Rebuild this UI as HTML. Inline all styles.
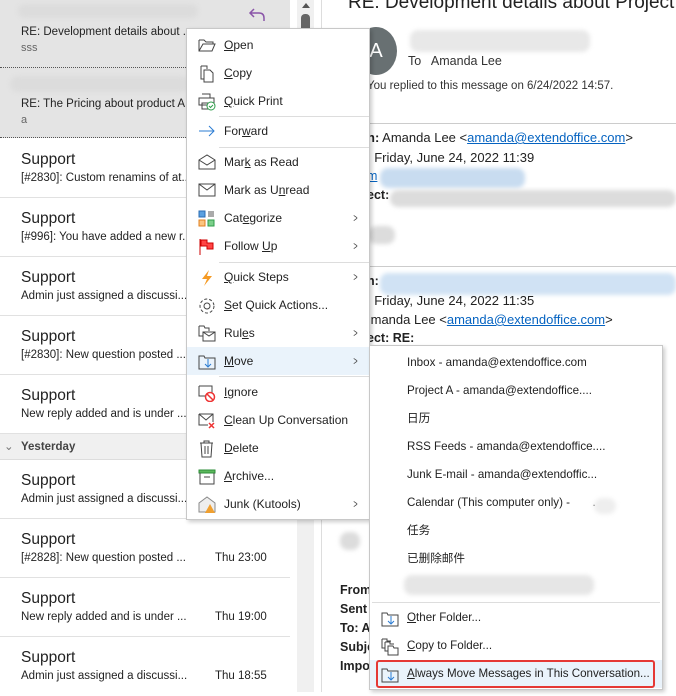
<!DOCTYPE html>
<html><head><meta charset="utf-8"><style>
*{margin:0;padding:0;box-sizing:border-box}
body{width:676px;height:692px;overflow:hidden;background:#fff;font-family:"Segoe UI","Liberation Sans","Noto Sans CJK SC",sans-serif;position:relative;color:#222}
.abs{position:absolute}
.row{position:absolute;left:0;width:290px;height:59px;border-bottom:1px solid #e1e1e1}
.row .n{position:absolute;left:21px;top:12px;font-size:15.5px;color:#222}
.row .s{position:absolute;left:21px;top:33px;font-size:11.5px;color:#222;white-space:nowrap}
.row .t{position:absolute;left:215px;top:33px;font-size:11.5px}
.blur{position:absolute;background:#dcdcdc;border-radius:8px;filter:blur(2px)}
.menu{position:absolute;background:#fff;border:1px solid #c8c8c8;box-shadow:2px 2px 4px rgba(0,0,0,.2);overflow:hidden}
.mi{position:absolute;left:0;right:0;height:28px;font-size:12px;line-height:28px;color:#222;white-space:nowrap}
.sub .mi{font-size:11.6px}
.mi .l{position:absolute;left:37px}
.mi .ar{position:absolute;right:10px;top:0;font-size:12px;color:#444;transform:scaleX(.6)}
.mi svg{position:absolute;left:11px;top:6px}
.sep{position:absolute;height:1px;background:#ddd}
.rp{font-size:12.5px;position:absolute;white-space:nowrap}
a{color:#0563c1;text-decoration:underline}
u{text-decoration:underline}
</style></head><body>
<div class="abs" style="left:0;top:0;width:290px;height:68px;background:#e4e4e4;border-bottom:1px dotted #555"></div>
<div class="blur" style="left:18px;top:4px;width:180px;height:14px"></div>
<div class="rp" style="left:21px;top:26px;font-size:11.5px">RE: Development details about ...</div>
<div class="rp" style="left:21px;top:42px;font-size:11px;color:#666">sss</div>
<svg class="abs" style="left:248px;top:7px" width="18" height="16"><path d="M6 2 L2 6 L6 10 M2 6 H11 Q16 6 16 11 V14" stroke="#8a55a8" stroke-width="1.5" fill="none"/></svg>
<div class="abs" style="left:0;top:68px;width:290px;height:70px;background:#e4e4e4;border-bottom:1px dotted #555"></div>
<div class="blur" style="left:10px;top:76px;width:180px;height:16px"></div>
<div class="rp" style="left:21px;top:98px;font-size:11.5px">RE: The Pricing about product A</div>
<div class="rp" style="left:21px;top:114px;font-size:11px;color:#666">a</div>
<div class="row" style="top:139px"><div class="n">Support</div><div class="s">[#2830]: Custom renamins of at...</div></div>
<div class="row" style="top:198px"><div class="n">Support</div><div class="s">[#996]: You have added a new r...</div></div>
<div class="row" style="top:257px"><div class="n">Support</div><div class="s">Admin just assigned a discussi...</div></div>
<div class="row" style="top:316px"><div class="n">Support</div><div class="s">[#2830]: New question posted ...</div></div>
<div class="row" style="top:375px"><div class="n">Support</div><div class="s">New reply added and is under ...</div></div>
<div class="abs" style="left:0;top:434px;width:290px;height:26px;background:#f0f0f0;border-bottom:1px solid #ddd;font-size:11.5px;font-weight:bold;color:#444;line-height:26px"><span style="position:absolute;left:4px;color:#777;font-weight:normal">⌄</span><span style="position:absolute;left:21px">Yesterday</span></div>
<div class="row" style="top:460px"><div class="n">Support</div><div class="s">Admin just assigned a discussi...</div></div>
<div class="row" style="top:519px"><div class="n">Support</div><div class="s">[#2828]: New question posted ...</div><div class="t">Thu 23:00</div></div>
<div class="row" style="top:578px"><div class="n">Support</div><div class="s">New reply added and is under ...</div><div class="t">Thu 19:00</div></div>
<div class="row" style="top:637px;border:none"><div class="n">Support</div><div class="s">Admin just assigned a discussi...</div><div class="t">Thu 18:55</div></div>
<div class="abs" style="left:297px;top:0;width:17px;height:692px;background:#f0f0f0"></div>
<div class="abs" style="left:302px;top:3px;width:0;height:0;border-left:4px solid transparent;border-right:4px solid transparent;border-bottom:5px solid #555"></div>
<div class="abs" style="left:301px;top:14px;width:9px;height:20px;background:#666;border-radius:4px"></div>
<div class="abs" style="left:321px;top:0;width:1px;height:692px;background:#ddd"></div>
<div class="rp" style="left:348px;top:-8px;font-size:19px">RE: Development details about Project A</div>
<div class="abs" style="left:355px;top:27px;width:42px;height:48px;border-radius:50%;background:#687072;color:#fff;font-size:20px;line-height:48px;text-align:center">A</div>
<div class="blur" style="left:410px;top:30px;width:180px;height:22px;background:#e8e8e8"></div>
<div class="rp" style="left:408px;top:54px;color:#333">To &nbsp; Amanda Lee</div>
<div class="rp" style="left:367px;top:80px;font-size:11.5px;color:#333">You replied to this message on 6/24/2022 14:57.</div>
<div class="abs" style="left:367px;top:123px;width:309px;height:1px;background:#ccc"></div>
<div class="rp" style="left:367px;top:130px;font-size:13px"><b>n:</b> Amanda Lee &lt;<a>amanda@extendoffice.com</a>&gt;</div>
<div class="rp" style="left:367px;top:150px;font-size:13px">: Friday, June 24, 2022 11:39</div>
<div class="rp" style="left:367px;top:169px"><a>m</a></div>
<div class="blur" style="left:380px;top:168px;width:145px;height:20px;background:#c8dcf0"></div>
<div class="rp" style="left:367px;top:188px"><b>ect:</b></div>
<div class="blur" style="left:390px;top:190px;width:286px;height:17px"></div>
<div class="blur" style="left:368px;top:226px;width:27px;height:18px"></div>
<div class="abs" style="left:367px;top:266px;width:309px;height:1px;background:#ccc"></div>
<div class="rp" style="left:367px;top:274px"><b>n:</b></div>
<div class="blur" style="left:380px;top:273px;width:296px;height:22px;background:#d0e2f4"></div>
<div class="rp" style="left:367px;top:293px;font-size:13px">: Friday, June 24, 2022 11:35</div>
<div class="rp" style="left:367px;top:312px;font-size:13px">.manda Lee &lt;<a>amanda@extendoffice.com</a>&gt;</div>
<div class="rp" style="left:367px;top:331px"><b>ect: RE:</b></div>
<div class="blur" style="left:340px;top:532px;width:20px;height:18px"></div>
<div class="rp" style="left:340px;top:581px;font-weight:bold;line-height:19px">From<br>Sent<br>To: A<br>Subje<br>Impo</div>
<div class="menu" style="left:186px;top:28px;width:184px;height:492px">
 <div class="mi" style="top:2px"><svg width="18" height="16"><path d="M1 3h5l2 2h7v2M1 3v11h13l3-7H5l-4 7" stroke="#444" fill="none"/></svg><span class="l"><u>O</u>pen</span></div>
 <div class="mi" style="top:30px"><svg width="18" height="18"><path d="M3 1h6v3M3 1v13h3M6 5h6l3 3v9H6z" stroke="#444" fill="none"/></svg><span class="l"><u>C</u>opy</span></div>
 <div class="mi" style="top:58px"><svg width="18" height="18"><path d="M4 1h8v4M1 5h15v7H1zM4 10h6v6H4z" stroke="#444" fill="#fff"/><circle cx="13" cy="13" r="4" fill="#fff" stroke="#2e9e4a"/><path d="M11 13l1.5 1.5L15 12" stroke="#2e9e4a" fill="none"/></svg><span class="l"><u>Q</u>uick Print</span></div>
 <div class="sep" style="left:32px;right:0;top:87px"></div>
 <div class="mi" style="top:88px"><svg width="18" height="16"><path d="M1 8h15M11 3l5 5-5 5" stroke="#2b7cd3" fill="none"/></svg><span class="l">For<u>w</u>ard</span></div>
 <div class="sep" style="left:32px;right:0;top:118px"></div>
 <div class="mi" style="top:119px"><svg width="18" height="16"><path d="M1 6l8-5 8 5v9H1zM1 6l8 5 8-5" stroke="#444" fill="none"/></svg><span class="l">Mar<u>k</u> as Read</span></div>
 <div class="mi" style="top:147px"><svg width="18" height="16"><path d="M1 2h16v12H1zM1 2l8 6 8-6" stroke="#444" fill="none"/></svg><span class="l">Mark as U<u>n</u>read</span></div>
 <div class="mi" style="top:175px"><svg width="18" height="18"><rect x="1" y="1" width="6" height="6" fill="#5aa0e0" stroke="#2b6cb3"/><rect x="10" y="1" width="6" height="6" fill="#aaa"/><rect x="1" y="10" width="6" height="6" fill="#fbc580" stroke="#e08020"/><rect x="10" y="10" width="6" height="6" fill="#7ccf8a" stroke="#2e9e4a"/></svg><span class="l">Cat<u>e</u>gorize</span><span class="ar">&gt;</span></div>
 <div class="mi" style="top:203px"><svg width="18" height="18"><path d="M2 1v16" stroke="#c00"/><path d="M3 2h6v3h6v6H9V8H3z" fill="#f44" stroke="#c00"/></svg><span class="l">Follow <u>U</u>p</span><span class="ar">&gt;</span></div>
 <div class="sep" style="left:32px;right:0;top:233px"></div>
 <div class="mi" style="top:234px"><svg width="18" height="18"><path d="M11 1L4 10h5l-3 7 8-10H9z" fill="#f59a23"/></svg><span class="l"><u>Q</u>uick Steps</span><span class="ar">&gt;</span></div>
 <div class="mi" style="top:262px"><svg width="18" height="18"><circle cx="9" cy="9" r="3" stroke="#444" fill="none"/><circle cx="9" cy="9" r="7" stroke="#444" fill="none" stroke-dasharray="3 2"/></svg><span class="l"><u>S</u>et Quick Actions...</span></div>
 <div class="mi" style="top:290px"><svg width="18" height="18"><path d="M1 1h5l1 2h4v3M1 1v10h4M5 7h12v9H5zM5 7l6 4 6-4" stroke="#444" fill="none"/></svg><span class="l">Rul<u>e</u>s</span><span class="ar">&gt;</span></div>
 <div class="mi" style="top:318px;background:#eaf3fb"><svg width="18" height="18"><path d="M1 3h5l1 2h10v11H1z" stroke="#444" fill="none"/><path d="M10 6v8M7 11l3 3 3-3" stroke="#2b7cd3" fill="none"/></svg><span class="l"><u>M</u>ove</span><span class="ar">&gt;</span></div>
 <div class="sep" style="left:32px;right:0;top:347px"></div>
 <div class="mi" style="top:349px"><svg width="18" height="18"><path d="M1 2h13v9M1 2v10h7" stroke="#444" fill="none"/><circle cx="12" cy="13" r="4.5" stroke="#e33" stroke-width="1.5" fill="#fff"/><path d="M9 10l6 6" stroke="#e33" stroke-width="1.5"/></svg><span class="l"><u>I</u>gnore</span></div>
 <div class="mi" style="top:377px"><svg width="18" height="18"><path d="M1 2h14v8M1 2v11h9M1 2l7 6 7-6" stroke="#444" fill="none"/><path d="M11 11l5 5M16 11l-5 5" stroke="#e33" stroke-width="1.5"/></svg><span class="l"><u>C</u>lean Up Conversation</span></div>
 <div class="mi" style="top:405px"><svg width="18" height="18"><path d="M2 3h13M6 3V1h5v2M3 3l1 14h9l1-14M7 6v8M10 6v8" stroke="#444" fill="none"/></svg><span class="l"><u>D</u>elete</span></div>
 <div class="mi" style="top:433px"><svg width="18" height="18"><rect x="1" y="2" width="16" height="3" fill="#5cb85c" stroke="#2e8e3a"/><path d="M2 5v11h14V5M6 9h6" stroke="#444" fill="none"/></svg><span class="l"><u>A</u>rchive...</span></div>
 <div class="mi" style="top:461px"><svg width="18" height="18"><path d="M1 7l8-6 8 6v9H1z" stroke="#888" fill="#eee"/><path d="M12 8l-5 9h10z" fill="#f0a030"/></svg><span class="l">Junk (Kutools)</span><span class="ar">&gt;</span></div>
</div>
<div class="menu sub" style="left:369px;top:345px;width:294px;height:345px">
 <div class="mi" style="top:3px"><span class="l">Inbox - amanda@extendoffice.com</span></div>
 <div class="mi" style="top:31px"><span class="l">Project A - amanda@extendoffice....</span></div>
 <div class="mi" style="top:59px"><span class="l">日历</span></div>
 <div class="mi" style="top:87px"><span class="l">RSS Feeds - amanda@extendoffice....</span></div>
 <div class="mi" style="top:115px"><span class="l">Junk E-mail - amanda@extendoffic...</span></div>
 <div class="mi" style="top:143px"><span class="l">Calendar (This computer only) - &nbsp; &nbsp; &nbsp; .</span></div>
 <div class="blur" style="left:224px;top:152px;width:22px;height:16px;background:#eee"></div>
 <div class="mi" style="top:171px"><span class="l">任务</span></div>
 <div class="mi" style="top:199px"><span class="l">已删除邮件</span></div>
 <div class="blur" style="left:34px;top:229px;width:190px;height:20px;background:#e6e6e6"></div>
 <div class="sep" style="left:2px;right:2px;top:256px"></div>
 <div class="mi" style="top:258px"><svg width="18" height="18"><path d="M1 3h5l1 2h10v11H1z" stroke="#444" fill="none"/><path d="M10 6v8M7 11l3 3 3-3" stroke="#2b7cd3" fill="none"/></svg><span class="l"><u>O</u>ther Folder...</span></div>
 <div class="mi" style="top:286px"><svg width="18" height="18"><path d="M1 1h5v2h4M1 1v9h3M4 4h5v2h4M4 4v9h3M7 8h5l1 2h4v7H7z" stroke="#444" fill="none"/></svg><span class="l"><u>C</u>opy to Folder...</span></div>
 <div class="mi" style="top:314px;background:#eaf3fb"><svg width="18" height="18"><path d="M1 3h5l1 2h10v11H1z" stroke="#444" fill="none"/><path d="M10 6v8M7 11l3 3 3-3" stroke="#2b7cd3" fill="none"/></svg><span class="l"><u>A</u>lways Move Messages in This Conversation...</span></div>
</div>
<div class="abs" style="left:376px;top:660px;width:279px;height:28px;border:2px solid #e53935;border-radius:3px"></div>
</body></html>
